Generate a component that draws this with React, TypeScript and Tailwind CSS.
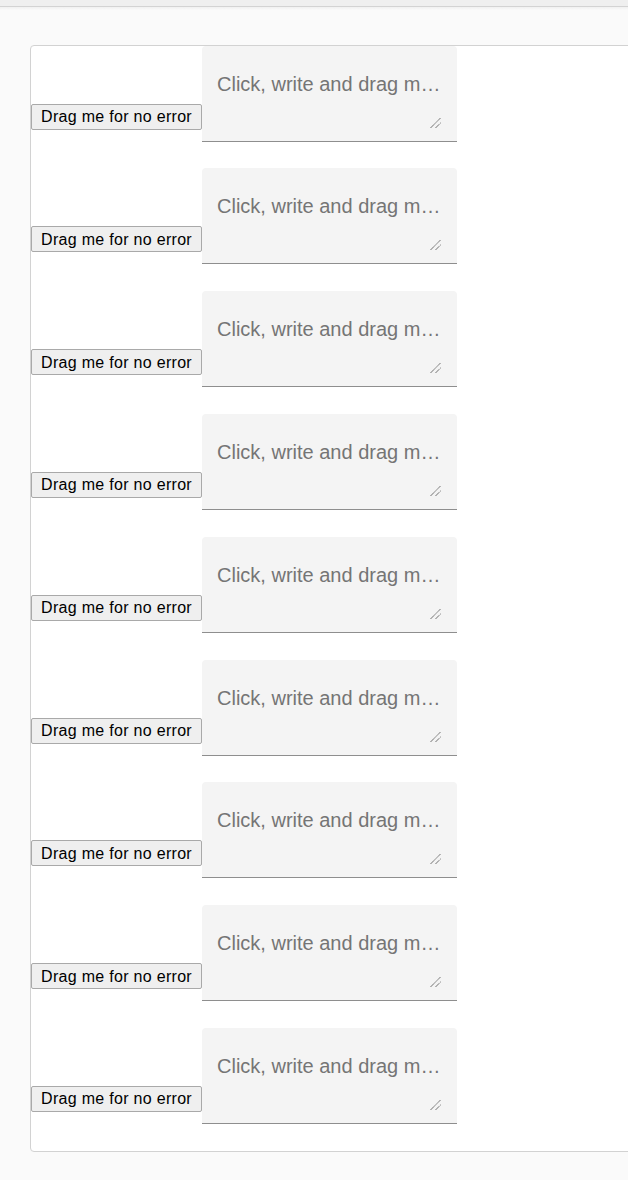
import React from "react";

const ROWS = [0, 1, 2, 3, 4, 5, 6, 7, 8];

const ResizeGrip = () => (
    <svg width="12" height="12" viewBox="0 0 12 12" className="absolute right-[1px] bottom-[1px] pointer-events-none">
        <line x1="0.5" y1="11" x2="10.5" y2="1" stroke="#3a3a3a" strokeWidth="1" strokeDasharray="1 0.6" />
        <line x1="5.5" y1="11" x2="10.5" y2="6" stroke="#3a3a3a" strokeWidth="1" strokeDasharray="1 0.6" />
    </svg>
);

const DragRow = () => {
    return (
        <div className="flex items-end mb-[26.8px]">
            <button
                draggable
                className="w-[171px] h-[26px] mb-[12px] border border-[#a9a9a9] bg-[#efefef] text-[16px] leading-[18px] pt-[1px] tracking-[0.3px] text-black text-center rounded-[2px] px-0"
            >
                Drag me for no error
            </button>
            <div className="w-[255px] h-[96px] bg-[#f4f4f4] rounded-t-[4px] border-b border-[#8e8e8e] pl-[15px] pr-[14px] pt-[27px] pb-[11px]">
                <div className="relative w-full h-full">
                    <textarea
                        placeholder="Click, write and drag me for an error"
                        className="block w-full h-full p-0 bg-transparent border-0 outline-none text-[20px] leading-[23px] text-[#333] whitespace-nowrap overflow-hidden text-ellipsis placeholder:text-[#757575] placeholder:truncate resize-none"
                    />
                    <ResizeGrip />
                </div>
            </div>
        </div>
    );
};

export default function App() {
    return (
        <div className="min-h-[1180px] bg-[#fafafa] overflow-hidden font-['Liberation_Sans',Arial,sans-serif]">
            <div className="h-[7px] bg-[#efefef] border-b border-[#d3d3d3]" />
            <div className="h-[3px] bg-gradient-to-b from-[#f0f0f0] to-[#fafafa]" />
            <div className="pt-[34.6px] pl-[30px]">
                <div className="w-[640px] bg-white border border-[#d2d2d2] rounded-[4px]">
                    {ROWS.map((row) => (
                        <DragRow key={row} />
                    ))}
                </div>
            </div>
        </div>
    );
}
